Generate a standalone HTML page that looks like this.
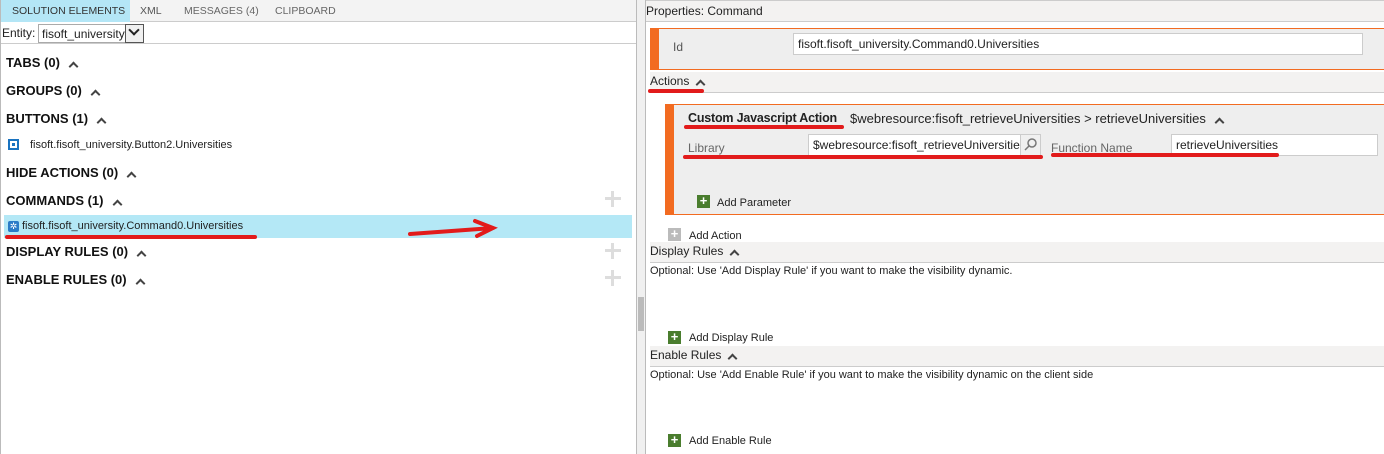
<!DOCTYPE html>
<html><head><style>
*{margin:0;padding:0;box-sizing:border-box}
body{width:1384px;height:454px;background:#fff;font-family:"Liberation Sans",sans-serif;font-size:12px;color:#222;position:relative;overflow:hidden}
.a{position:absolute;white-space:nowrap}
.h{font-weight:bold;font-size:13px;color:#111}
.car{display:inline-block;width:7px;height:7px;border-left:2px solid #444;border-top:2px solid #444;transform:rotate(45deg);margin-left:10px;position:relative;top:3px}
.red{position:absolute;background:#e21b1b;height:4px;border-radius:2px}
.plus{position:absolute;width:13px;height:13px;background:#4a7d2e;color:#fff;font-size:13px;line-height:12px;text-align:center;font-weight:bold}
.gplus{position:absolute;width:16px;height:16px}
.gplus:before{content:"";position:absolute;left:6px;top:0;width:3px;height:16px;background:#ddd}
.gplus:after{content:"";position:absolute;left:0;top:6px;width:16px;height:3px;background:#ddd}
.or{background:#f26b21;position:absolute}
</style></head><body>
<!-- left panel -->
<div class="a" style="left:0;top:0;width:637px;height:22px;background:#f3f3f3;border-bottom:1px solid #ccc"></div>
<div class="a" style="left:0;top:0;width:130px;height:22px;background:#b4e6f6"></div>
<div class="a" style="left:12px;top:5px;font-size:10.5px;color:#333">SOLUTION ELEMENTS</div>
<div class="a" style="left:140px;top:5px;font-size:10.5px;color:#555">XML</div>
<div class="a" style="left:184px;top:5px;font-size:10.5px;color:#666">MESSAGES (4)</div>
<div class="a" style="left:275px;top:5px;font-size:10.5px;color:#666">CLIPBOARD</div>
<div class="a" style="left:0;top:22px;width:637px;height:22px;border-bottom:1px solid #ccc"></div>
<div class="a" style="left:2px;top:26px">Entity:</div>
<div class="a" style="left:38px;top:24px;width:88px;height:19px;border:1px solid #aaa;padding:2px 3px;overflow:hidden">fisoft_university</div>
<div class="a" style="left:125px;top:24px;width:19px;height:19px;border:1px solid #555;background:#f0f0f0"></div>
<div class="a" style="left:130px;top:26px;width:8px;height:8px;border-right:2px solid #222;border-bottom:2px solid #222;transform:rotate(45deg)"></div>
<div class="a" style="left:0;top:0;width:1px;height:454px;background:#bbb"></div>
<div class="a" style="left:636px;top:0;width:1px;height:454px;background:#bbb"></div>

<div class="a h" style="left:6px;top:55px">TABS (0)<span class="car"></span></div>
<div class="a h" style="left:6px;top:83px">GROUPS (0)<span class="car"></span></div>
<div class="a h" style="left:6px;top:111px">BUTTONS (1)<span class="car"></span></div>
<div class="a" style="left:8px;top:139px;width:11px;height:11px;border:2px solid #1a73c0"><div style="margin:2px;width:3px;height:3px;background:#1a73c0"></div></div>
<div class="a" style="left:30px;top:139px;font-size:11px">fisoft.fisoft_university.Button2.Universities</div>
<div class="a h" style="left:6px;top:165px">HIDE ACTIONS (0)<span class="car"></span></div>
<div class="a h" style="left:6px;top:193px">COMMANDS (1)<span class="car"></span></div>
<div class="gplus" style="left:605px;top:191px"></div>
<div class="a" style="left:4px;top:215px;width:628px;height:23px;background:#b4e8f6"></div>
<div class="a" style="left:8px;top:221px;width:11px;height:11px;background:#2a7cc7;border-radius:2px;color:#fff;font-size:9px;line-height:11px;text-align:center">✲</div>
<div class="a" style="left:22px;top:220px;font-size:11px">fisoft.fisoft_university.Command0.Universities</div>
<div class="red" style="left:5px;top:235px;width:252px"></div>
<svg class="a" style="left:405px;top:218px" width="95" height="22"><path d="M5 16 L88 10 M70 3 L88 10 L72 18" stroke="#e21b1b" stroke-width="4" fill="none" stroke-linecap="round"/></svg>
<div class="a h" style="left:6px;top:244px">DISPLAY RULES (0)<span class="car"></span></div>
<div class="gplus" style="left:605px;top:243px"></div>
<div class="a h" style="left:6px;top:272px">ENABLE RULES (0)<span class="car"></span></div>
<div class="gplus" style="left:605px;top:270px"></div>

<!-- splitter -->
<div class="a" style="left:637px;top:0;width:8px;height:454px;background:#f0f0f0"></div>
<div class="a" style="left:638px;top:297px;width:6px;height:34px;background:#bbb"></div>
<div class="a" style="left:645px;top:0;width:1px;height:454px;background:#bbb"></div>

<!-- right panel -->
<div class="a" style="left:646px;top:0;width:738px;height:22px;background:#f3f2f1;border-bottom:1px solid #ccc;border-top:1px solid #ccc"></div>
<div class="a" style="left:646px;top:4px;color:#222">Properties: Command</div>
<div class="a" style="left:650px;top:28px;width:734px;height:42px;background:#eeeeee;border-top:1px solid #f26b21;border-bottom:1px solid #f26b21"></div>
<div class="or" style="left:650px;top:28px;width:9px;height:42px"></div>
<div class="a" style="left:673px;top:40px;color:#555">Id</div>
<div class="a" style="left:793px;top:33px;width:570px;height:22px;background:#fff;border:1px solid #ccc;padding:3px 4px">fisoft.fisoft_university.Command0.Universities</div>
<div class="a" style="left:650px;top:72px;width:734px;height:21px;background:#f3f2f1;border-bottom:1px solid #ccc"></div>
<div class="a" style="left:650px;top:74px">Actions<span class="car" style="margin-left:8px"></span></div>
<div class="red" style="left:648px;top:89px;width:56px"></div>
<div class="a" style="left:665px;top:104px;width:719px;height:111px;background:#eeeeee;border-top:1px solid #f26b21;border-bottom:1px solid #f26b21"></div>
<div class="or" style="left:665px;top:104px;width:9px;height:111px"></div>
<div class="a" style="left:688px;top:111px;font-weight:bold;font-size:12.5px;letter-spacing:-0.2px">Custom Javascript Action</div>
<div class="a" style="left:850px;top:111px;font-size:13px">$webresource:fisoft_retrieveUniversities &gt; retrieveUniversities<span class="car"></span></div>
<div class="red" style="left:684px;top:125px;width:160px"></div>
<div class="a" style="left:688px;top:141px;color:#666">Library</div>
<div class="a" style="left:808px;top:134px;width:213px;height:22px;background:#fff;border:1px solid #ccc;padding:3px 4px;overflow:hidden">$webresource:fisoft_retrieveUniversities</div>
<div class="a" style="left:1020px;top:134px;width:21px;height:22px;background:#f0f0f0;border:1px solid #ccc"></div>
<svg class="a" style="left:1024px;top:137px" width="14" height="14"><circle cx="8" cy="6" r="4" stroke="#777" stroke-width="1.5" fill="none"/><path d="M5 9 L1 13" stroke="#777" stroke-width="1.5"/></svg>
<div class="red" style="left:683px;top:155px;width:360px"></div>
<div class="a" style="left:1051px;top:141px;color:#666">Function Name</div>
<div class="a" style="left:1171px;top:134px;width:207px;height:22px;background:#fff;border:1px solid #ccc;padding:3px 4px">retrieveUniversities</div>
<div class="red" style="left:1051px;top:153px;width:228px"></div>
<div class="plus" style="left:697px;top:195px">+</div>
<div class="a" style="left:717px;top:197px;font-size:11px">Add Parameter</div>
<div class="plus" style="left:668px;top:228px;background:#bbb">+</div>
<div class="a" style="left:689px;top:230px;font-size:11px">Add Action</div>
<div class="a" style="left:650px;top:242px;width:734px;height:21px;background:#f3f2f1;border-bottom:1px solid #ccc"></div>
<div class="a" style="left:650px;top:244px">Display Rules<span class="car" style="margin-left:8px"></span></div>
<div class="a" style="left:650px;top:265px;font-size:11px">Optional: Use 'Add Display Rule' if you want to make the visibility dynamic.</div>
<div class="plus" style="left:668px;top:331px">+</div>
<div class="a" style="left:689px;top:332px;font-size:11px">Add Display Rule</div>
<div class="a" style="left:650px;top:346px;width:734px;height:21px;background:#f3f2f1;border-bottom:1px solid #ccc"></div>
<div class="a" style="left:650px;top:348px">Enable Rules<span class="car" style="margin-left:8px"></span></div>
<div class="a" style="left:650px;top:369px;font-size:11px">Optional: Use 'Add Enable Rule' if you want to make the visibility dynamic on the client side</div>
<div class="plus" style="left:668px;top:434px">+</div>
<div class="a" style="left:689px;top:435px;font-size:11px">Add Enable Rule</div>
</body></html>
